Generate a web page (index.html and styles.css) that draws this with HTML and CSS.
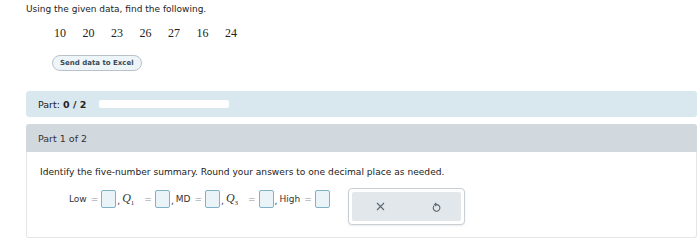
FILE: index.html
```html
<!DOCTYPE html>
<html>
<head>
<meta charset="utf-8">
<link rel="stylesheet" href="styles.css">
</head>
<body>
<div class="page">
  <p class="intro">Using the given data, find the following.</p>
  <div class="data">
    <span>10</span><span>20</span><span>23</span><span>26</span><span>27</span><span>16</span><span>24</span>
  </div>
  <button class="excel-btn">Send data to Excel</button>
  <div class="part-bar">
    <span class="part-label">Part: <b>0 / 2</b></span>
    <span class="progress"></span>
  </div>
  <div class="part-header">Part 1 of 2</div>
  <div class="part-body">
    <p class="question">Identify the five-number summary. Round your answers to one decimal place as needed.</p>
    <div class="answer-row">
      <div class="fields">
        <span class="lbl">Low</span><span class="eq">=</span><span class="box"></span><span class="comma">,</span>
        <span class="q">Q<sub>1</sub></span><span class="eq">=</span><span class="box"></span><span class="comma">,</span>
        <span class="lbl">MD</span><span class="eq">=</span><span class="box"></span><span class="comma">,</span>
        <span class="q">Q<sub>3</sub></span><span class="eq">=</span><span class="box"></span><span class="comma">,</span>
        <span class="lbl">High</span><span class="eq">=</span><span class="box"></span>
      </div>
      <div class="tools">
        <div class="tools-inner">
          <svg class="icon-x" width="9" height="9" viewBox="0 0 9 9"><path d="M1 1L8 8M8 1L1 8" stroke="#5b6770" stroke-width="1.1" fill="none"/></svg>
          <svg class="icon-undo" width="9" height="10" viewBox="0 0 9 10"><path d="M2.2 3.6A3.3 3.3 0 1 0 4.5 2.6H3.2" stroke="#5b6770" stroke-width="1.1" fill="none"/><path d="M4.3 1L2.6 2.6L4.3 4.2" stroke="#5b6770" stroke-width="1.1" fill="none"/></svg>
        </div>
      </div>
    </div>
  </div>
</div>
</body>
</html>
```
FILE: styles.css
```css
* { box-sizing: border-box; }
body {
  margin: 0;
  background: #ffffff;
  font-family: "DejaVu Sans", Verdana, sans-serif;
  color: #222;
}
.page {
  padding: 3px 3px 0 26px;
}
.intro {
  margin: 0;
  font-size: 9px;
  line-height: 12px;
}
.data {
  display: flex;
  gap: 16.5px;
  margin: 11px 0 0 28px;
  font-family: "Liberation Serif", "Times New Roman", serif;
  font-size: 12px;
  line-height: 14px;
  color: #222;
}
.excel-btn {
  display: block;
  margin: 15px 0 0 26px;
  height: 16px;
  padding: 0 7px;
  border: 1px solid #b9c2c8;
  border-radius: 8px;
  background: #eef5f9;
  font-family: "DejaVu Sans", Verdana, sans-serif;
  font-size: 7px;
  font-weight: bold;
  color: #3a4a57;
  line-height: 14px;
}
.part-bar {
  display: flex;
  align-items: center;
  gap: 13px;
  margin-top: 20px;
  height: 26px;
  padding-left: 12px;
  background: #d9e7ef;
  border-radius: 3px;
  font-size: 9.5px;
}
.part-label b { font-weight: bold; }
.progress {
  width: 130px;
  height: 8px;
  background: #ffffff;
  border-radius: 2px;
}
.part-header {
  margin-top: 7px;
  height: 28px;
  padding-left: 12px;
  display: flex;
  align-items: center;
  background: #d1d8de;
  border-radius: 3px 3px 0 0;
  font-size: 9.5px;
  color: #333;
}
.part-body {
  height: 86px;
  border: 1px solid #e3e7ea;
  border-top: none;
  border-radius: 0 0 3px 3px;
  padding: 14px 0 0 13px;
}
.question {
  margin: 0;
  font-size: 9.1px;
  line-height: 12px;
}
.answer-row {
  display: flex;
  align-items: flex-start;
  margin: 10px 0 0 29px;
}
.fields {
  display: flex;
  align-items: center;
  margin-top: 2px;
  font-size: 9px;
  color: #333;
}
.eq {
  color: #8a949b;
  margin: 0 3px 0 4px;
}
.box {
  width: 15px;
  height: 18px;
  border: 1px solid #7fb1c6;
  border-radius: 2px;
  background: #eaf4f8;
}
.comma {
  margin: 4px 2px 0 1px;
}
.q {
  font-family: "Liberation Serif", "Times New Roman", serif;
  font-style: italic;
  font-size: 12px;
  margin-right: 6px;
}
.q sub {
  font-size: 7px;
  font-style: normal;
}
.tools {
  margin-left: 18px;
  width: 117px;
  height: 37px;
  padding: 3px;
  border: 1px solid #c9cfd3;
  border-radius: 4px;
  background: #fff;
  box-shadow: 0 1px 2px rgba(0,0,0,0.08);
}
.tools-inner {
  height: 100%;
  background: #e1e7eb;
  border-radius: 2px;
  display: flex;
  align-items: center;
  padding-left: 24px;
  gap: 47px;
}
```
